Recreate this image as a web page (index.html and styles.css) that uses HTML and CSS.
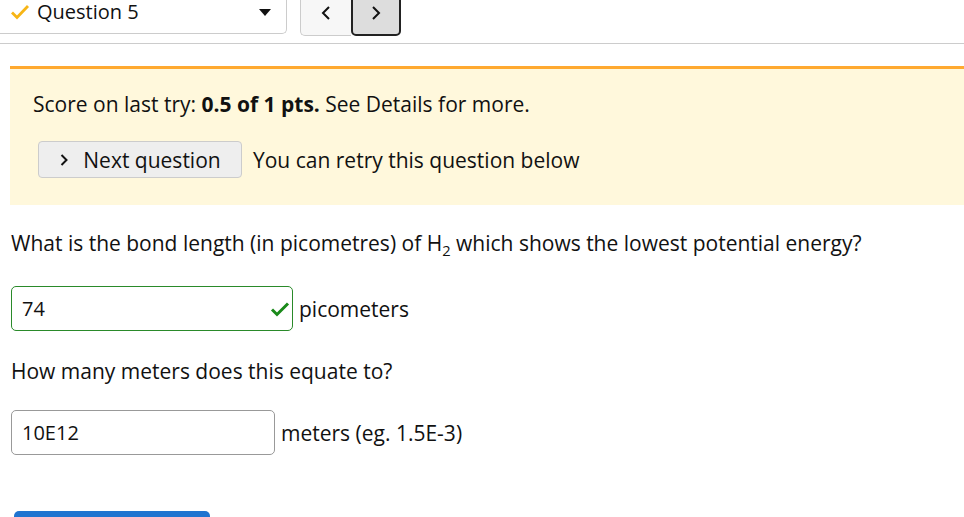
FILE: index.html
```html
<!DOCTYPE html>
<html>
<head>
<meta charset="utf-8">
<link rel="stylesheet" href="styles.css">
</head>
<body>
<div class="topbar">
  <div class="qselect">
    <svg class="qcheck" width="20" height="16" viewBox="0 0 20 16"><path d="M2 8.5 L7 13.5 L18 2" fill="none" stroke="#f7b516" stroke-width="2.8"/></svg>
    <span class="qlabel">Question 5</span>
    <span class="caret"></span>
  </div>
  <div class="navgroup">
    <button class="nav prev"><svg width="10" height="16" viewBox="0 0 10 16"><path d="M8 2 L2 8 L8 14" fill="none" stroke="#111" stroke-width="2"/></svg></button>
    <button class="nav next"><svg width="10" height="16" viewBox="0 0 10 16"><path d="M2 2 L8 8 L2 14" fill="none" stroke="#111" stroke-width="2"/></svg></button>
  </div>
</div>
<div class="rule"></div>
<div class="notice">
  <p class="score">Score on last try: <b>0.5 of 1 pts.</b> See Details for more.</p>
  <div class="nextrow">
    <button class="nextbtn"><svg width="10" height="14" viewBox="0 0 10 14"><path d="M2.5 2 L7.5 7 L2.5 12" fill="none" stroke="#111" stroke-width="2"/></svg>Next question</button>
    <span class="retry">You can retry this question below</span>
  </div>
</div>
<p class="q">What is the bond length (in picometres) of H<sub>2</sub> which shows the lowest potential energy?</p>
<div class="answer a1">
  <div class="field correct">
    <span class="val">74</span>
    <svg class="ok" width="20" height="16" viewBox="0 0 20 16"><path d="M2 8.5 L7 13.5 L18 2.5" fill="none" stroke="#1a8a1a" stroke-width="3"/></svg>
  </div>
  <span class="unit">picometers</span>
</div>
<p class="q q2">How many meters does this equate to?</p>
<div class="answer a2">
  <div class="field plain"><span class="val">10E12</span></div>
  <span class="unit">meters (eg. 1.5E-3)</span>
</div>
<div class="submit"></div>
</body>
</html>
```
FILE: styles.css
```css
html, body { margin: 0; padding: 0; background: #fff; }
body { font-family: "Open Sans", "DejaVu Sans", sans-serif; color: #111; font-size: 21px; overflow: hidden; height: 517px; }
.topbar { display: flex; align-items: flex-start; height: 36px; }
.qselect { box-sizing: border-box; width: 287px; height: 36px; margin-top: -2px; border: 1px solid #ccc; border-left: none; border-top: none; border-radius: 0 0 5px 0; display: flex; align-items: center; padding-left: 10px; }
.qcheck { margin-right: 7px; margin-top: -8px; }
.qlabel { font-size: 20px; margin-top: -8px; }
.caret { margin-left: auto; margin-right: 15px; margin-top: -6px; width: 0; height: 0; border-left: 6px solid transparent; border-right: 6px solid transparent; border-top: 7px solid #111; }
.navgroup { display: flex; margin-left: 13px; margin-top: -4px; }
.nav { box-sizing: border-box; width: 51px; height: 40px; display: flex; align-items: center; justify-content: center; padding: 0 0 6px; }
.prev { background: #f7f7f7; border: 1px solid #ccc; border-right: none; border-radius: 0 0 0 5px; }
.next { background: #ddd; border: 2px solid #222; border-radius: 0 0 5px 5px; width: 50px; }
.rule { height: 1px; background: #ccc; margin-top: 7px; }
.notice { margin: 22px 0 0 10px; background: #fff8dc; border-top: 3px solid #ffa930; padding: 21px 23px 27px; }
.score { margin: 0 0 23px; }
.nextrow { display: flex; align-items: center; gap: 11px; padding-left: 5px; }
.nextbtn { font: inherit; color: #111; background: #eee; border: 1px solid #ccc; border-radius: 4px; height: 37px; width: 204px; display: flex; align-items: center; justify-content: center; gap: 14px; padding: 0; }
.q { margin: 24px 0 0 11px; }
sub { font-size: 70%; vertical-align: -5px; line-height: 0; }
.answer { display: flex; align-items: center; margin-left: 11px; gap: 6px; }
.a1 { margin-top: 29px; }
.a2 { margin-top: 25px; }
.field { box-sizing: border-box; height: 45px; border-radius: 5px; display: flex; align-items: center; padding: 0 10px; background: #fff; }
.correct { width: 282px; border: 1px solid #2a8a2a; }
.plain { width: 264px; border: 1px solid #999; }
.val { font-size: 20px; flex: 1; }
.ok { margin-right: -8px; }
.q2 { margin-top: 26px; }
.submit { margin: 56px 0 0 14px; width: 196px; height: 20px; background: #1f74d0; border-radius: 5px 5px 0 0; }
```
